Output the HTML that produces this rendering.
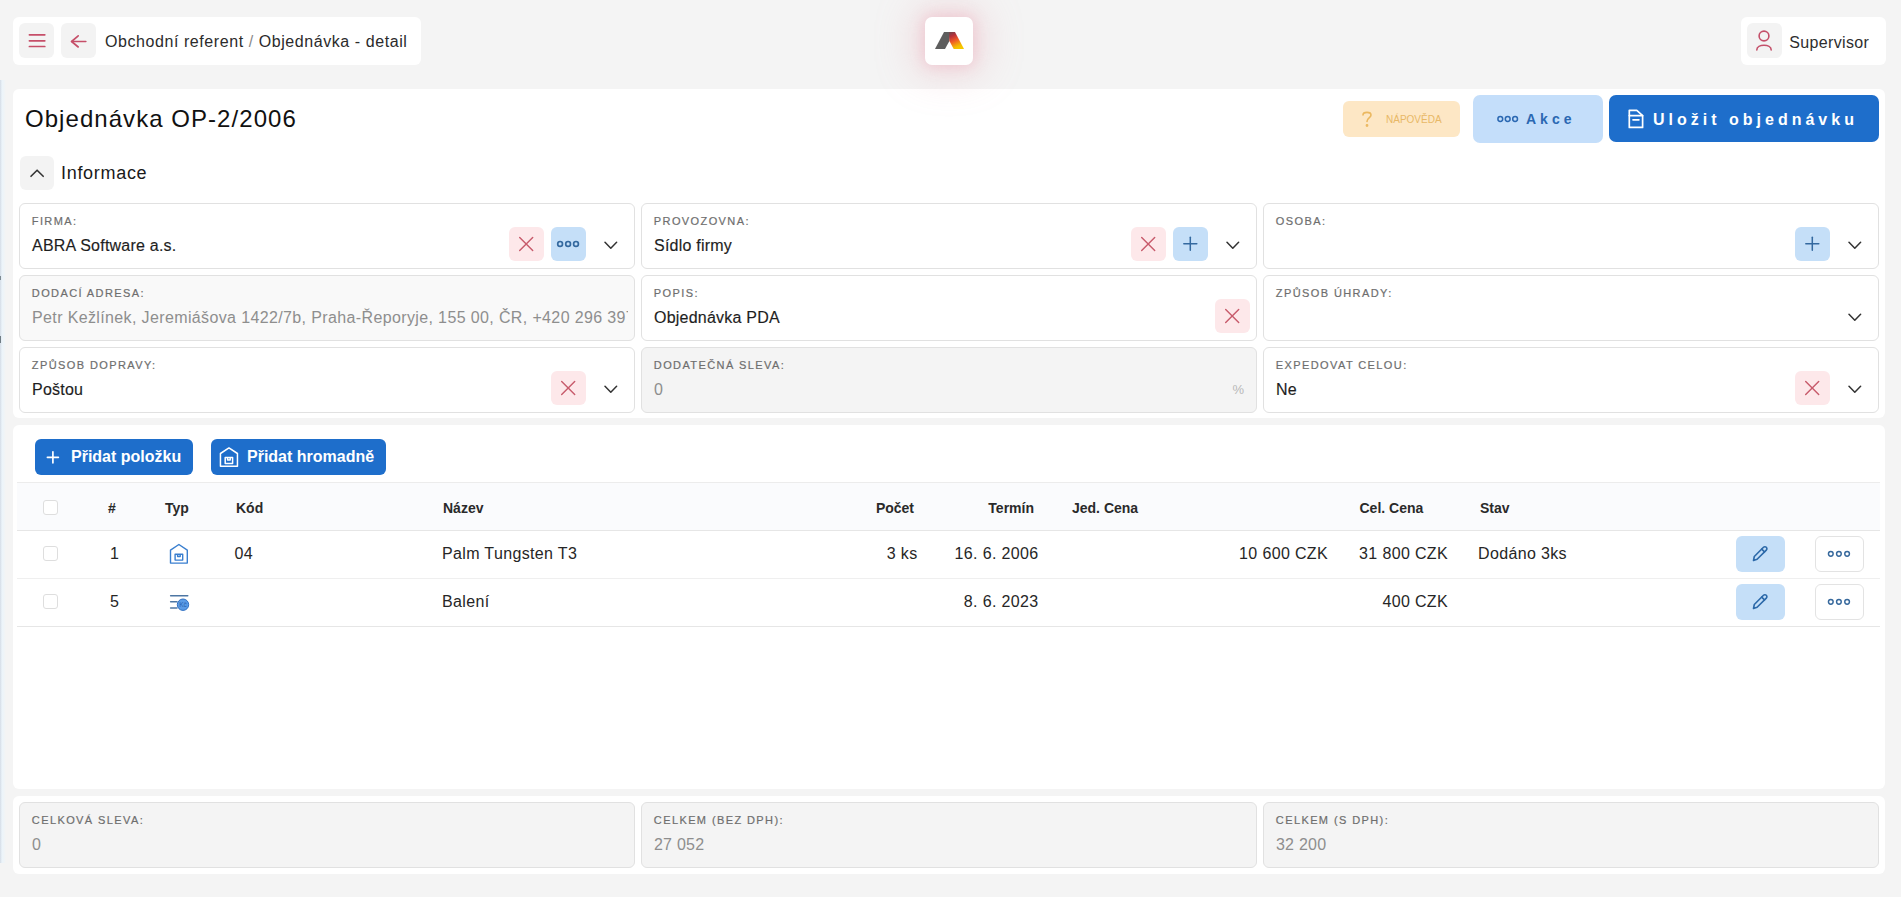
<!DOCTYPE html>
<html><head><meta charset="utf-8">
<style>
*{box-sizing:border-box;margin:0;padding:0}
html,body{width:1901px;height:897px;overflow:hidden;background:#f4f4f4;font-family:"Liberation Sans",sans-serif;color:#222}
.abs{position:absolute}
.t{position:absolute;white-space:nowrap;line-height:1}
.card{position:absolute;background:#fff;border-radius:6px}
.ibtn{position:absolute;width:35px;height:35px;border-radius:6px;background:#f3f3f3}
.fld{position:absolute;height:65px;border:1px solid #e1e1e1;border-radius:6px;background:#fff;overflow:hidden}
.fld.dis{background:#f9f9f9}
.fld.dis2{background:#f4f4f4}
.lbl{position:absolute;left:11.8px;top:11.6px;font-size:11px;line-height:1;letter-spacing:1.4px;color:#6e6e6e;white-space:nowrap;-webkit-text-stroke:0.2px #6e6e6e}
.val{position:absolute;left:12px;top:34.2px;font-size:16px;line-height:1;letter-spacing:0.22px;color:#1e1e1e;white-space:nowrap;-webkit-text-stroke:0.15px #1e1e1e}
.dis .val,.dis2 .val{color:#8e8e8e;-webkit-text-stroke:0}
.sb{position:absolute;top:23px;width:35px;height:34px;border-radius:6px}
.sb.x{background:#fde8ea}
.sb.b{background:#c5dff8}
.chev{position:absolute;top:37px;right:15px;width:15px;height:9px}
.th{position:absolute;top:500.6px;font-size:14px;font-weight:700;line-height:1;color:#2a2a2a;white-space:nowrap}
.td{position:absolute;font-size:16px;line-height:1;letter-spacing:0.35px;color:#262626;white-space:nowrap}
.r{text-align:right}
.cb{position:absolute;left:43px;width:15px;height:15px;border:1px solid #dedede;border-radius:3px;background:#fff}
</style></head>
<body>
<!-- left sidebar edge -->
<div class="abs" style="left:0;top:80px;width:6px;height:783px;background:linear-gradient(90deg,#d4dce6 0px,#dfe7ef 1px,#ecf4fa 2px,#eef4f8 3.5px,#f2f4f5 5px,#f4f4f4 6px)"></div>

<div class="abs" style="left:0;top:276px;width:1px;height:4px;background:#7d8a92"></div>
<div class="abs" style="left:0;top:336px;width:1px;height:7px;background:#6f7c84"></div>
<!-- top header left -->
<div class="card" style="left:13px;top:17px;width:408px;height:48px"></div>
<div class="ibtn" style="left:19px;top:23px;width:35px;height:35px"></div>
<svg class="abs" style="left:19px;top:23px" width="35" height="35" viewBox="0 0 35 35"><g stroke="#c64f69" stroke-width="1.7" stroke-linecap="round"><line x1="10.4" y1="11.8" x2="25.8" y2="11.8"/><line x1="10.4" y1="17.8" x2="25.8" y2="17.8"/><line x1="10.4" y1="23.5" x2="25.8" y2="23.5"/></g></svg>
<div class="ibtn" style="left:61px;top:23px;width:35px;height:35px"></div>
<svg class="abs" style="left:61px;top:23px" width="35" height="35" viewBox="0 0 35 35"><g stroke="#c64f69" stroke-width="1.65" stroke-linecap="round" stroke-linejoin="round" fill="none"><line x1="10.6" y1="18.5" x2="24.8" y2="18.5"/><polyline points="17.2,12.9 10.6,18.5 17.2,24"/></g></svg>
<div class="t" style="left:105px;top:34.2px;font-size:16px;letter-spacing:0.57px;color:#2b2b2b">Obchodní referent <span style="color:#8a8a8a">/</span> Objednávka - detail</div>

<!-- logo -->
<div class="card" style="left:925px;top:17px;width:48px;height:48px;border-radius:7px;box-shadow:0 0 14px 3px rgba(235,150,170,0.30),0 0 40px 10px rgba(232,150,165,0.26);z-index:2"></div>
<svg class="abs" style="left:925px;top:17px;z-index:3" width="48" height="48" viewBox="0 0 48 48">
<defs><linearGradient id="lg" x1="0.2" y1="0" x2="0.6" y2="1"><stop offset="0" stop-color="#7e4048"/><stop offset="0.2" stop-color="#b8303a"/><stop offset="0.5" stop-color="#f05a26"/><stop offset="0.85" stop-color="#f3bc00"/><stop offset="1" stop-color="#f5c800"/></linearGradient></defs>
<polygon points="10,32 19,15 25.5,15 24.4,24 20,32" fill="#5e5e5e"/>
<polygon points="24.2,15 30,15 39,32 28.7,32 24.4,24" fill="url(#lg)"/>
</svg>

<!-- supervisor -->
<div class="card" style="left:1741px;top:17px;width:145px;height:48px"></div>
<div class="ibtn" style="left:1747px;top:23px"></div>
<svg class="abs" style="left:1747px;top:23px" width="35" height="35" viewBox="0 0 35 35"><g stroke="#c4506a" stroke-width="1.6" fill="none" stroke-linecap="round"><circle cx="17" cy="13" r="4.9"/><path d="M9.8,27 C9.8,20.6 24.2,20.6 24.2,27"/></g></svg>
<div class="t" style="left:1789.2px;top:35.3px;font-size:16px;letter-spacing:0.35px;color:#2e2e2e">Supervisor</div>

<!-- main card -->
<div class="card" style="left:13px;top:89px;width:1872px;height:329px"></div>
<div class="t" style="left:25px;top:106.5px;font-size:24px;letter-spacing:1.05px;color:#111">Objednávka OP-2/2006</div>

<!-- napoveda -->
<div class="abs" style="left:1343px;top:101px;width:117px;height:36px;border-radius:6px;background:#fde7c5"></div>
<svg class="abs" style="left:1360px;top:110px" width="14" height="18" viewBox="0 0 14 18"><g stroke="#ebb860" stroke-width="1.6" fill="none" stroke-linecap="round"><path d="M3,5 C3,1.5 11,1.5 11,5 C11,8 7,8 7,11.5"/><circle cx="7" cy="15.5" r="0.6" fill="#ebb860"/></g></svg>
<div class="t" style="left:1386px;top:114.9px;font-size:10px;letter-spacing:0px;color:#e8b866">NÁPOVĚDA</div>

<!-- akce -->
<div class="abs" style="left:1473px;top:95px;width:130px;height:48px;border-radius:7px;background:#c4defa"></div>
<svg class="abs" style="left:1495px;top:113px" width="26" height="12" viewBox="0 0 26 12"><g stroke="#2b68b2" stroke-width="1.5" fill="none"><circle cx="5.3" cy="6" r="2.4"/><circle cx="12.7" cy="6" r="2.4"/><circle cx="20.1" cy="6" r="2.4"/></g></svg>
<div class="t" style="left:1526px;top:112.1px;font-size:14px;font-weight:700;letter-spacing:4px;color:#2b68b2">Akce</div>

<!-- ulozit -->
<div class="abs" style="left:1609px;top:95px;width:270px;height:47px;border-radius:7px;background:#1e6ecb"></div>
<svg class="abs" style="left:1626px;top:108px" width="20" height="22" viewBox="0 0 20 22"><g stroke="#fff" stroke-width="1.7" fill="none" stroke-linejoin="round" stroke-linecap="round"><path d="M3.3,2.3 H10.8 L16.6,7.6 V19.4 H3.3 Z"/><line x1="3.3" y1="7.6" x2="16.6" y2="7.6"/><line x1="7" y1="11.8" x2="12.9" y2="11.8"/></g></svg>
<div class="t" style="left:1653px;top:112px;font-size:16px;font-weight:700;letter-spacing:4px;color:#fff">Uložit objednávku</div>

<!-- informace -->
<div class="ibtn" style="left:20px;top:156px;width:34px;height:34px"></div>
<svg class="abs" style="left:20px;top:156px" width="34" height="34" viewBox="0 0 34 34"><polyline points="11,20.3 17.1,14.2 23.2,20.3" stroke="#333" stroke-width="1.6" fill="none" stroke-linecap="round" stroke-linejoin="round"/></svg>
<div class="t" style="left:61px;top:163.6px;font-size:18px;letter-spacing:0.7px;color:#1a1a1a">Informace</div>

<!--FIELDS-->
<div class="fld " style="left:19px;top:203px;width:616px;height:66px"><div class="lbl">FIRMA:</div><div class="val" style="">ABRA Software a.s.</div><div class="sb b" style="right:48px"><svg class="abs" style="left:0;top:0" width="35" height="34" viewBox="0 0 35 34"><g stroke="#34699f" stroke-width="1.7" fill="none"><circle cx="9.1" cy="16.9" r="2.4"/><circle cx="17.1" cy="16.9" r="2.4"/><circle cx="25" cy="16.9" r="2.4"/></g></svg></div><div class="sb x" style="right:90px"><svg class="abs" style="left:0;top:0" width="35" height="34" viewBox="0 0 35 34"><g stroke="#c85d6d" stroke-width="1.45" stroke-linecap="round"><line x1="10.7" y1="10.5" x2="23.7" y2="23.5"/><line x1="23.7" y1="10.5" x2="10.7" y2="23.5"/></g></svg></div><svg class="chev" viewBox="0 0 15 9"><polyline points="1,1.3 6.8,7.3 12.6,1.3" stroke="#333" stroke-width="1.5" fill="none" stroke-linecap="round" stroke-linejoin="round"/></svg></div>
<div class="fld " style="left:641px;top:203px;width:616px;height:66px"><div class="lbl">PROVOZOVNA:</div><div class="val" style="">Sídlo firmy</div><div class="sb b" style="right:48px"><svg class="abs" style="left:0;top:0" width="35" height="34" viewBox="0 0 35 34"><g stroke="#34699f" stroke-width="1.5" stroke-linecap="round"><line x1="17.3" y1="10.3" x2="17.3" y2="23.3"/><line x1="10.8" y1="16.8" x2="23.8" y2="16.8"/></g></svg></div><div class="sb x" style="right:90px"><svg class="abs" style="left:0;top:0" width="35" height="34" viewBox="0 0 35 34"><g stroke="#c85d6d" stroke-width="1.45" stroke-linecap="round"><line x1="10.7" y1="10.5" x2="23.7" y2="23.5"/><line x1="23.7" y1="10.5" x2="10.7" y2="23.5"/></g></svg></div><svg class="chev" viewBox="0 0 15 9"><polyline points="1,1.3 6.8,7.3 12.6,1.3" stroke="#333" stroke-width="1.5" fill="none" stroke-linecap="round" stroke-linejoin="round"/></svg></div>
<div class="fld " style="left:1263px;top:203px;width:616px;height:66px"><div class="lbl">OSOBA:</div><div class="sb b" style="right:48px"><svg class="abs" style="left:0;top:0" width="35" height="34" viewBox="0 0 35 34"><g stroke="#34699f" stroke-width="1.5" stroke-linecap="round"><line x1="17.3" y1="10.3" x2="17.3" y2="23.3"/><line x1="10.8" y1="16.8" x2="23.8" y2="16.8"/></g></svg></div><svg class="chev" viewBox="0 0 15 9"><polyline points="1,1.3 6.8,7.3 12.6,1.3" stroke="#333" stroke-width="1.5" fill="none" stroke-linecap="round" stroke-linejoin="round"/></svg></div>
<div class="fld dis" style="left:19px;top:275px;width:616px;height:66px"><div class="lbl">DODACÍ ADRESA:</div><div class="val" style="right:6px;overflow:hidden;height:26px;top:29.2px;line-height:26px;letter-spacing:0.37px">Petr Kežlínek, Jeremiášova 1422/7b, Praha-Řeporyje, 155 00, ČR, +420 296 397 111</div></div>
<div class="fld " style="left:641px;top:275px;width:616px;height:66px"><div class="lbl">POPIS:</div><div class="val" style="">Objednávka PDA</div><div class="sb x" style="right:6px"><svg class="abs" style="left:0;top:0" width="35" height="34" viewBox="0 0 35 34"><g stroke="#c85d6d" stroke-width="1.45" stroke-linecap="round"><line x1="10.7" y1="10.5" x2="23.7" y2="23.5"/><line x1="23.7" y1="10.5" x2="10.7" y2="23.5"/></g></svg></div></div>
<div class="fld " style="left:1263px;top:275px;width:616px;height:66px"><div class="lbl">ZPŮSOB ÚHRADY:</div><svg class="chev" viewBox="0 0 15 9"><polyline points="1,1.3 6.8,7.3 12.6,1.3" stroke="#333" stroke-width="1.5" fill="none" stroke-linecap="round" stroke-linejoin="round"/></svg></div>
<div class="fld " style="left:19px;top:347px;width:616px;height:66px"><div class="lbl">ZPŮSOB DOPRAVY:</div><div class="val" style="">Poštou</div><div class="sb x" style="right:48px"><svg class="abs" style="left:0;top:0" width="35" height="34" viewBox="0 0 35 34"><g stroke="#c85d6d" stroke-width="1.45" stroke-linecap="round"><line x1="10.7" y1="10.5" x2="23.7" y2="23.5"/><line x1="23.7" y1="10.5" x2="10.7" y2="23.5"/></g></svg></div><svg class="chev" viewBox="0 0 15 9"><polyline points="1,1.3 6.8,7.3 12.6,1.3" stroke="#333" stroke-width="1.5" fill="none" stroke-linecap="round" stroke-linejoin="round"/></svg></div>
<div class="fld dis2" style="left:641px;top:347px;width:616px;height:66px"><div class="lbl">DODATEČNÁ SLEVA:</div><div class="val" style="">0</div><div class="t" style="right:12px;top:34.6px;font-size:13px;color:#b8b8b8">%</div></div>
<div class="fld " style="left:1263px;top:347px;width:616px;height:66px"><div class="lbl">EXPEDOVAT CELOU:</div><div class="val" style="">Ne</div><div class="sb x" style="right:48px"><svg class="abs" style="left:0;top:0" width="35" height="34" viewBox="0 0 35 34"><g stroke="#c85d6d" stroke-width="1.45" stroke-linecap="round"><line x1="10.7" y1="10.5" x2="23.7" y2="23.5"/><line x1="23.7" y1="10.5" x2="10.7" y2="23.5"/></g></svg></div><svg class="chev" viewBox="0 0 15 9"><polyline points="1,1.3 6.8,7.3 12.6,1.3" stroke="#333" stroke-width="1.5" fill="none" stroke-linecap="round" stroke-linejoin="round"/></svg></div>
<div class="card" style="left:13px;top:425px;width:1872px;height:364px"></div>
<div class="abs" style="left:35px;top:439px;width:158px;height:36px;border-radius:6px;background:#1e6ecb"></div>
<svg class="abs" style="left:44px;top:448px" width="18" height="18" viewBox="0 0 18 18"><g stroke="#fff" stroke-width="1.7" stroke-linecap="round"><line x1="8.9" y1="3.8" x2="8.9" y2="14.8"/><line x1="3.4" y1="9.3" x2="14.4" y2="9.3"/></g></svg>
<div class="t" style="left:71px;top:448.5px;font-size:16px;font-weight:700;color:#fff">Přidat položku</div>
<div class="abs" style="left:211px;top:439px;width:175px;height:36px;border-radius:6px;background:#1e6ecb"></div>
<svg class="abs" style="left:218px;top:446px" width="22" height="22" viewBox="0 0 22 22"><g stroke="#fff" stroke-width="1.5" fill="none" stroke-linejoin="round"><path d="M2.45,7.5 L10.95,1.95 L19.45,7.5 V20.25 H2.45 Z"/><rect x="7.2" y="11.6" width="7.4" height="5.9"/><path d="M9.6,11.6 V13.9 H12.2 V11.6"/></g></svg>
<div class="t" style="left:247px;top:448.5px;font-size:16px;font-weight:700;color:#fff">Přidat hromadně</div>
<div class="abs" style="left:17px;top:482px;width:1863px;height:49px;background:#fafbfd;border-top:1px solid #ececec;border-bottom:1px solid #e6e6e6"></div>
<div class="abs" style="left:17px;top:578px;width:1863px;height:1px;background:#efefef"></div>
<div class="abs" style="left:17px;top:626px;width:1863px;height:1px;background:#e6e6e6"></div>
<div class="cb" style="top:500px"></div>
<div class="cb" style="top:546px"></div>
<div class="cb" style="top:594px"></div>
<div class="th" style="left:108px">#</div>
<div class="th" style="left:165px">Typ</div>
<div class="th" style="left:236px">Kód</div>
<div class="th" style="left:443px">Název</div>
<div class="th r" style="left:714px;width:200px">Počet</div>
<div class="th r" style="left:834px;width:200px">Termín</div>
<div class="th" style="left:1072px">Jed. Cena</div>
<div class="th" style="left:1359.5px">Cel. Cena</div>
<div class="th" style="left:1480px">Stav</div>
<div class="td" style="left:110px;top:546px">1</div>
<div class="td" style="left:234.5px;top:546px">04</div>
<div class="td" style="left:442px;top:546px">Palm Tungsten T3</div>
<div class="td r" style="left:617.5px;top:546px;width:300px">3 ks</div>
<div class="td r" style="left:738.5px;top:546px;width:300px">16. 6. 2006</div>
<div class="td r" style="left:1028px;top:546px;width:300px">10 600 CZK</div>
<div class="td r" style="left:1148px;top:546px;width:300px">31 800 CZK</div>
<div class="td" style="left:1478px;top:546px">Dodáno 3ks</div>
<div class="td" style="left:110px;top:594px">5</div>
<div class="td" style="left:442px;top:594px">Balení</div>
<div class="td r" style="left:738.5px;top:594px;width:300px">8. 6. 2023</div>
<div class="td r" style="left:1148px;top:594px;width:300px">400 CZK</div>
<svg class="abs" style="left:168px;top:543px" width="22" height="22" viewBox="0 0 22 22"><g stroke="#3a7fcf" stroke-width="1.4" fill="none" stroke-linejoin="round"><path d="M2.5,7.2 L10.9,1.5 L19.3,7.2 V20.1 H2.5 Z"/><rect x="7.1" y="11.2" width="7.6" height="5.9"/><path d="M9.6,11.2 V13.5 H12.2 V11.2"/></g></svg>
<svg class="abs" style="left:168px;top:593px" width="24" height="20" viewBox="0 0 24 20"><g stroke="#4d76a3" stroke-width="1.4" stroke-linecap="round"><line x1="2.6" y1="2.7" x2="19.8" y2="2.7"/><line x1="2.6" y1="8.8" x2="9" y2="8.8"/><line x1="2.6" y1="15" x2="9" y2="15"/></g><circle cx="15" cy="11.7" r="5.7" fill="#5a9be6" stroke="#2f6fc2" stroke-width="1"/><text x="15" y="14" font-size="6.5" text-anchor="middle" fill="#2a62b0" font-family="Liberation Sans">Kč</text></svg>
<div class="abs" style="left:1736px;top:536px;width:49px;height:35.5px;border-radius:6px;background:#c5dff8"><svg class="abs" style="left:0;top:0" width="49" height="35" viewBox="0 0 49 35"><g stroke="#2c69a9" stroke-width="1.6" fill="none" stroke-linejoin="round" stroke-linecap="round"><path d="M17.5,24.5 L18.3,20.5 L27.5,11.3 C28.3,10.5 29.5,10.5 30.3,11.3 C31.1,12.1 31.1,13.3 30.3,14.1 L21.1,23.3 Z"/><line x1="25.7" y1="13.1" x2="28.5" y2="15.9"/></g></svg></div>
<div class="abs" style="left:1815px;top:536px;width:49px;height:35.5px;border-radius:6px;background:#fff;border:1px solid #e3e3e3"><svg class="abs" style="left:0;top:0" width="48" height="35" viewBox="0 0 48 35"><g stroke="#36689c" stroke-width="1.45" fill="none"><circle cx="14.8" cy="16.8" r="2.35"/><circle cx="22.9" cy="16.8" r="2.35"/><circle cx="31.1" cy="16.8" r="2.35"/></g></svg></div>
<div class="abs" style="left:1736px;top:584px;width:49px;height:35.5px;border-radius:6px;background:#c5dff8"><svg class="abs" style="left:0;top:0" width="49" height="35" viewBox="0 0 49 35"><g stroke="#2c69a9" stroke-width="1.6" fill="none" stroke-linejoin="round" stroke-linecap="round"><path d="M17.5,24.5 L18.3,20.5 L27.5,11.3 C28.3,10.5 29.5,10.5 30.3,11.3 C31.1,12.1 31.1,13.3 30.3,14.1 L21.1,23.3 Z"/><line x1="25.7" y1="13.1" x2="28.5" y2="15.9"/></g></svg></div>
<div class="abs" style="left:1815px;top:584px;width:49px;height:35.5px;border-radius:6px;background:#fff;border:1px solid #e3e3e3"><svg class="abs" style="left:0;top:0" width="48" height="35" viewBox="0 0 48 35"><g stroke="#36689c" stroke-width="1.45" fill="none"><circle cx="14.8" cy="16.8" r="2.35"/><circle cx="22.9" cy="16.8" r="2.35"/><circle cx="31.1" cy="16.8" r="2.35"/></g></svg></div>
<div class="card" style="left:13px;top:796px;width:1872px;height:78px"></div>
<div class="fld dis2" style="left:19px;top:802px;width:616px;height:66px"><div class="lbl">CELKOVÁ SLEVA:</div><div class="val" style="">0</div></div>
<div class="fld dis2" style="left:641px;top:802px;width:616px;height:66px"><div class="lbl">CELKEM (BEZ DPH):</div><div class="val" style="">27 052</div></div>
<div class="fld dis2" style="left:1263px;top:802px;width:616px;height:66px"><div class="lbl">CELKEM (S DPH):</div><div class="val" style="">32 200</div></div>
<!--/FIELDS-->

</body></html>
